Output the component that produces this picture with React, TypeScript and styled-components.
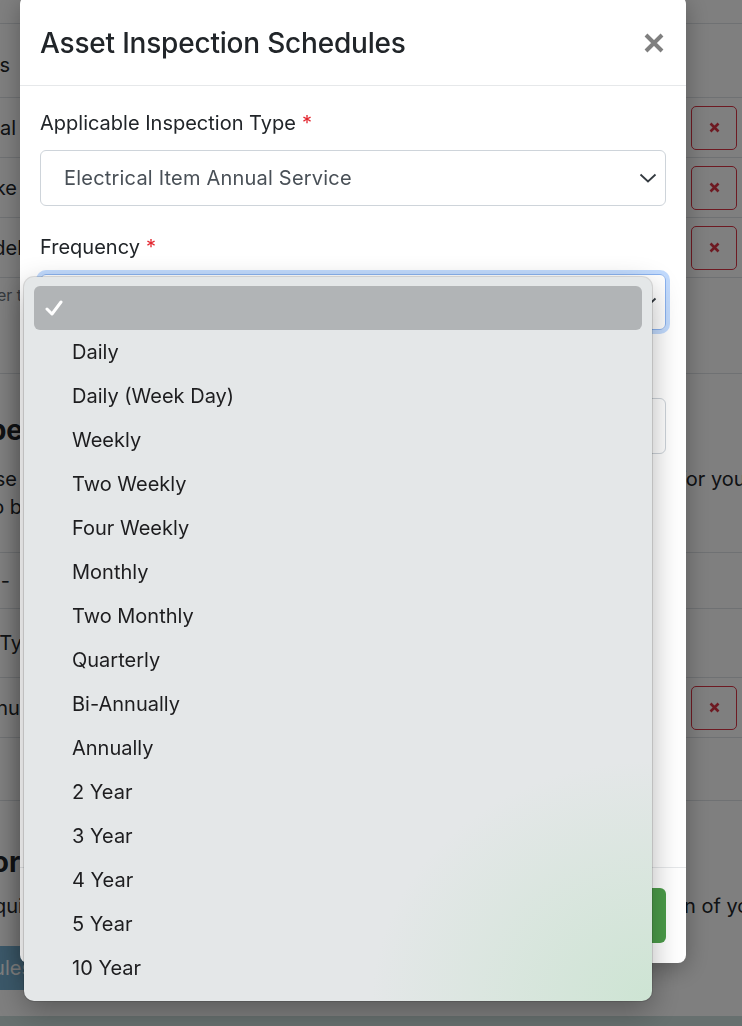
import React from 'react';
import styled, { createGlobalStyle } from 'styled-components';

const GlobalStyle = createGlobalStyle`
  html, body {
    margin: 0;
    padding: 0;
  }
  body {
    font-family: Inter, 'Noto Sans', sans-serif;
    color: #212529;
    background: #fff;
    overflow: hidden;
  }
  * {
    box-sizing: border-box;
  }
`;

/* ---------- page behind the modal ---------- */

const Page = styled.div`
  width: 742px;
  height: 1026px;
  overflow: hidden;
  display: flex;
  flex-direction: column;
  background: #fff;
  font-size: 20px;
  line-height: 28px;
`;

const TopStrip = styled.div`
  flex: none;
  height: 24px;
  border-bottom: 1px solid #dee2e6;
`;

const Row = styled.div<{ $h: number; $align?: string }>`
  flex: none;
  height: ${(p) => p.$h}px;
  display: flex;
  align-items: ${(p) => p.$align ?? 'center'};
  justify-content: space-between;
  padding-right: 5px;
  border-bottom: 1px solid #dee2e6;
`;

const Edge = styled.div<{ $end: number }>`
  flex: none;
  width: ${(p) => p.$end}px;
  display: flex;
  justify-content: flex-end;
  white-space: nowrap;
`;

const Tail = styled.div<{ $w: number }>`
  flex: none;
  width: ${(p) => p.$w}px;
  overflow: hidden;
  white-space: nowrap;
`;

const HelpText = styled.div`
  flex: none;
  height: 96px;
  padding-top: 5px;
  font-size: 16px;
  line-height: 24px;
  color: #6c757d;
  border-bottom: 1px solid #dee2e6;
`;

const Heading = styled.div<{ $top: number }>`
  flex: none;
  margin-top: ${(p) => p.$top}px;
  font-size: 28px;
  line-height: 34px;
  font-weight: 700;
`;

const ParaLine = styled.div<{ $top?: number }>`
  flex: none;
  margin-top: ${(p) => p.$top ?? 0}px;
  display: flex;
  justify-content: space-between;
  height: 28px;
`;

const Table = styled.div`
  flex: none;
  margin-top: 31px;
  border-top: 1px solid #dee2e6;
`;

const DeleteButton = styled.div`
  width: 46px;
  height: 44px;
  border: 1px solid #dc3545;
  border-radius: 5px;
  display: flex;
  align-items: center;
  justify-content: center;
`;

const InfoButton = styled.div`
  flex: none;
  height: 44px;
  padding: 0 18px;
  display: flex;
  align-items: center;
  border-radius: 5px;
  background: #76b0d2;
  color: #fff;
`;

const PageFooter = styled.div`
  margin-top: auto;
  height: 10px;
  background: #cee0de;
`;

const Backdrop = styled.div`
  position: fixed;
  inset: 0;
  background: rgba(0, 0, 0, 0.5);
`;

/* ---------- modal ---------- */

const Modal = styled.div`
  position: fixed;
  left: 20px;
  top: -4px;
  width: 666px;
  height: 967px;
  display: flex;
  flex-direction: column;
  background: #fff;
  border-radius: 8px;
  box-shadow: 0 6px 24px rgba(0, 0, 0, 0.3);
`;

const ModalHeader = styled.div`
  flex: none;
  height: 90px;
  padding: 4px 22px 0 20px;
  display: flex;
  align-items: center;
  justify-content: space-between;
  border-bottom: 1px solid #e6e8ea;
`;

const Title = styled.h2`
  margin: 0;
  font-size: 28px;
  font-weight: 500;
  letter-spacing: -0.2px;
  color: #212529;
`;

const ModalBody = styled.div`
  flex: 1;
  padding: 22px 20px 0;
  display: flex;
  flex-direction: column;
`;

const Label = styled.label`
  display: block;
  font-size: 20px;
  line-height: 30px;
  color: #212529;
  margin-bottom: 12px;
`;

const Required = styled.span`
  color: #e3262f;
  margin-left: 6px;
`;

const Field = styled.div`
  margin-bottom: 26px;
`;

const SelectBox = styled.div<{ $focused?: boolean }>`
  height: 56px;
  padding: 0 8px 0 23px;
  display: flex;
  align-items: center;
  justify-content: space-between;
  font-size: 20px;
  letter-spacing: 0.2px;
  color: #495057;
  border: 1px solid ${(p) => (p.$focused ? '#8bb3f0' : '#ced4da')};
  border-radius: 6px;
  box-shadow: ${(p) => (p.$focused ? '0 0 0 4px rgba(13, 110, 253, 0.25)' : 'none')};
`;

const ModalFooter = styled.div`
  flex: none;
  padding: 20px;
  display: flex;
  justify-content: flex-end;
  gap: 10px;
  border-top: 1px solid #e6e8ea;
`;

const FooterButton = styled.div<{ $variant: 'secondary' | 'success' }>`
  height: 55px;
  padding: 0 24px;
  display: flex;
  align-items: center;
  border-radius: 6px;
  font-size: 20px;
  color: #fff;
  background: ${(p) => (p.$variant === 'success' ? '#4c9d4a' : '#6c757d')};
`;

/* ---------- native select popup ---------- */

const Popup = styled.div`
  position: fixed;
  left: 24px;
  top: 277px;
  width: 628px;
  height: 724px;
  padding: 9px 10px 11px;
  border-radius: 10px;
  background:
    radial-gradient(ellipse 280px 240px at 100% 100%, rgba(204, 228, 210, 0.95), rgba(206, 228, 212, 0)),
    #e4e7e8;
  box-shadow: 0 0 0 1px rgba(0, 0, 0, 0.12), 0 10px 30px rgba(0, 0, 0, 0.3);
`;

const Option = styled.div<{ $selected?: boolean }>`
  height: 44px;
  padding-left: 11px;
  display: flex;
  align-items: center;
  border-radius: 6px;
  font-size: 20px;
  color: ${(p) => (p.$selected ? '#fff' : '#1d1d1f')};
  background: ${(p) => (p.$selected ? '#b1b4b6' : 'transparent')};
`;

const CheckSlot = styled.span`
  width: 27px;
  display: flex;
  align-items: center;
`;

const Chevron = () => (
  <svg width="18" height="10" viewBox="0 0 18 10">
    <polyline points="1.5,1.5 9,8.5 16.5,1.5" fill="none" stroke="#343a40" strokeWidth="1.8" />
  </svg>
);

const CloseIcon = () => (
  <svg width="20" height="20" viewBox="0 0 20 20">
    <path d="M2 2 L18 18 M18 2 L2 18" stroke="#7f7f7f" strokeWidth="4" />
  </svg>
);

const SmallX = () => (
  <svg width="11" height="11" viewBox="0 0 11 11">
    <path d="M1.5 1.5 L9.5 9.5 M9.5 1.5 L1.5 9.5" stroke="#dc3545" strokeWidth="2.6" />
  </svg>
);

const Check = () => (
  <svg width="18" height="16" viewBox="0 0 18 16">
    <polyline points="2,9 7,14 16,2" fill="none" stroke="#fff" strokeWidth="3" strokeLinecap="round" strokeLinejoin="round" />
  </svg>
);

const frequencies = [
  '',
  'Daily',
  'Daily (Week Day)',
  'Weekly',
  'Two Weekly',
  'Four Weekly',
  'Monthly',
  'Two Monthly',
  'Quarterly',
  'Bi-Annually',
  'Annually',
  '2 Year',
  '3 Year',
  '4 Year',
  '5 Year',
  '10 Year',
];

const App = () => {
  return (
    <>
      <GlobalStyle />
      <Page>
        <TopStrip />
        <Row $h={74} $align="flex-end" style={{ paddingBottom: 18 }}>
          <Edge $end={10}>Items</Edge>
        </Row>
        <Row $h={60}>
          <Edge $end={16}>Electrical</Edge>
          <DeleteButton>
            <SmallX />
          </DeleteButton>
        </Row>
        <Row $h={60}>
          <Edge $end={17}>Brake</Edge>
          <DeleteButton>
            <SmallX />
          </DeleteButton>
        </Row>
        <Row $h={60}>
          <Edge $end={22}>Model</Edge>
          <DeleteButton>
            <SmallX />
          </DeleteButton>
        </Row>
        <HelpText>
          <Edge $end={22}>Enter t</Edge>
        </HelpText>
        <Heading $top={39}>
          <Edge $end={23}>Inspe</Edge>
        </Heading>
        <ParaLine $top={18}>
          <Edge $end={17}>Please use</Edge>
          <Tail $w={63}>for your</Tail>
        </ParaLine>
        <ParaLine>
          <Edge $end={22}>to b</Edge>
        </ParaLine>
        <Table>
          <Row $h={56}>
            <Edge $end={10}>-</Edge>
          </Row>
          <Row $h={69}>
            <Edge $end={46}>Type</Edge>
          </Row>
          <Row $h={60}>
            <Edge $end={36}>Annual</Edge>
            <DeleteButton>
              <SmallX />
            </DeleteButton>
          </Row>
          <Row $h={63} />
        </Table>
        <Heading $top={44}>
          <Edge $end={36}>Inspectors</Edge>
        </Heading>
        <ParaLine $top={13}>
          <Edge $end={54}>Required</Edge>
          <Tail $w={70}>on of your</Tail>
        </ParaLine>
        <Edge $end={50} style={{ marginTop: 26 }}>
          <InfoButton>Schedules</InfoButton>
        </Edge>
        <PageFooter />
      </Page>
      <Backdrop />
      <Modal>
        <ModalHeader>
          <Title>Asset Inspection Schedules</Title>
          <CloseIcon />
        </ModalHeader>
        <ModalBody>
          <Field>
            <Label>
              Applicable Inspection Type<Required>*</Required>
            </Label>
            <SelectBox>
              Electrical Item Annual Service
              <Chevron />
            </SelectBox>
          </Field>
          <Field>
            <Label>
              Frequency<Required>*</Required>
            </Label>
            <SelectBox $focused>
              <span />
              <Chevron />
            </SelectBox>
          </Field>
          <Field>
            <Label>Next Inspection Due</Label>
            <SelectBox />
          </Field>
        </ModalBody>
        <ModalFooter>
          <FooterButton $variant="secondary">Close</FooterButton>
          <FooterButton $variant="success">Save</FooterButton>
        </ModalFooter>
      </Modal>
      <Popup>
        {frequencies.map((f, i) => (
          <Option key={`freq-${i}`} $selected={i === 0}>
            <CheckSlot>{i === 0 && <Check />}</CheckSlot>
            {f}
          </Option>
        ))}
      </Popup>
    </>
  );
};

export default App;
